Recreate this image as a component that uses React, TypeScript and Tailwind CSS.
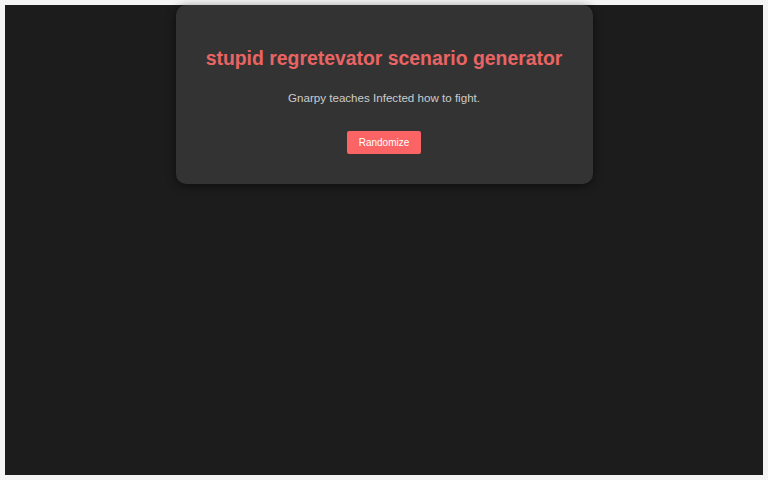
import { useState } from "react";

const SCENARIOS = [
    "Gnarpy teaches Infected how to fight.",
    "Pest hosts a cooking show in the elevator.",
    "Unpleasant Gradient gets stuck on floor 13.",
    "Poundabunny organizes a talent contest.",
];

export default function App() {
    const [scenario, setScenario] = useState(SCENARIOS[0]);

    const randomize = () => {
        const next = SCENARIOS[Math.floor(Math.random() * SCENARIOS.length)];
        setScenario(next);
    };

    return (
        <div className="h-[480px] w-full bg-[#f4f4f4] p-[5px] font-['Liberation_Sans',Arial,sans-serif]">
            <div className="flex h-full w-full items-start justify-center bg-[#1c1c1c]">
                {/* card */}
                <div className="flex w-[417px] flex-col items-center rounded-[10px] bg-[#333333] pt-[41px] pb-[30px] shadow-[0_2px_10px_rgba(0,0,0,0.5)]">
                    <h1 className="text-[19.4px] leading-[24px] font-bold text-[#ea6464]">
                        stupid regretevator scenario generator
                    </h1>
                    <p className="mt-[20px] text-[11.6px] leading-[15px] text-[#cccccc]">{scenario}</p>
                    <button
                        onClick={randomize}
                        className="mt-[26px] h-[23px] w-[74px] rounded-[2px] bg-[#fb6464] text-[10px] text-white"
                    >
                        Randomize
                    </button>
                </div>
            </div>
        </div>
    );
}
